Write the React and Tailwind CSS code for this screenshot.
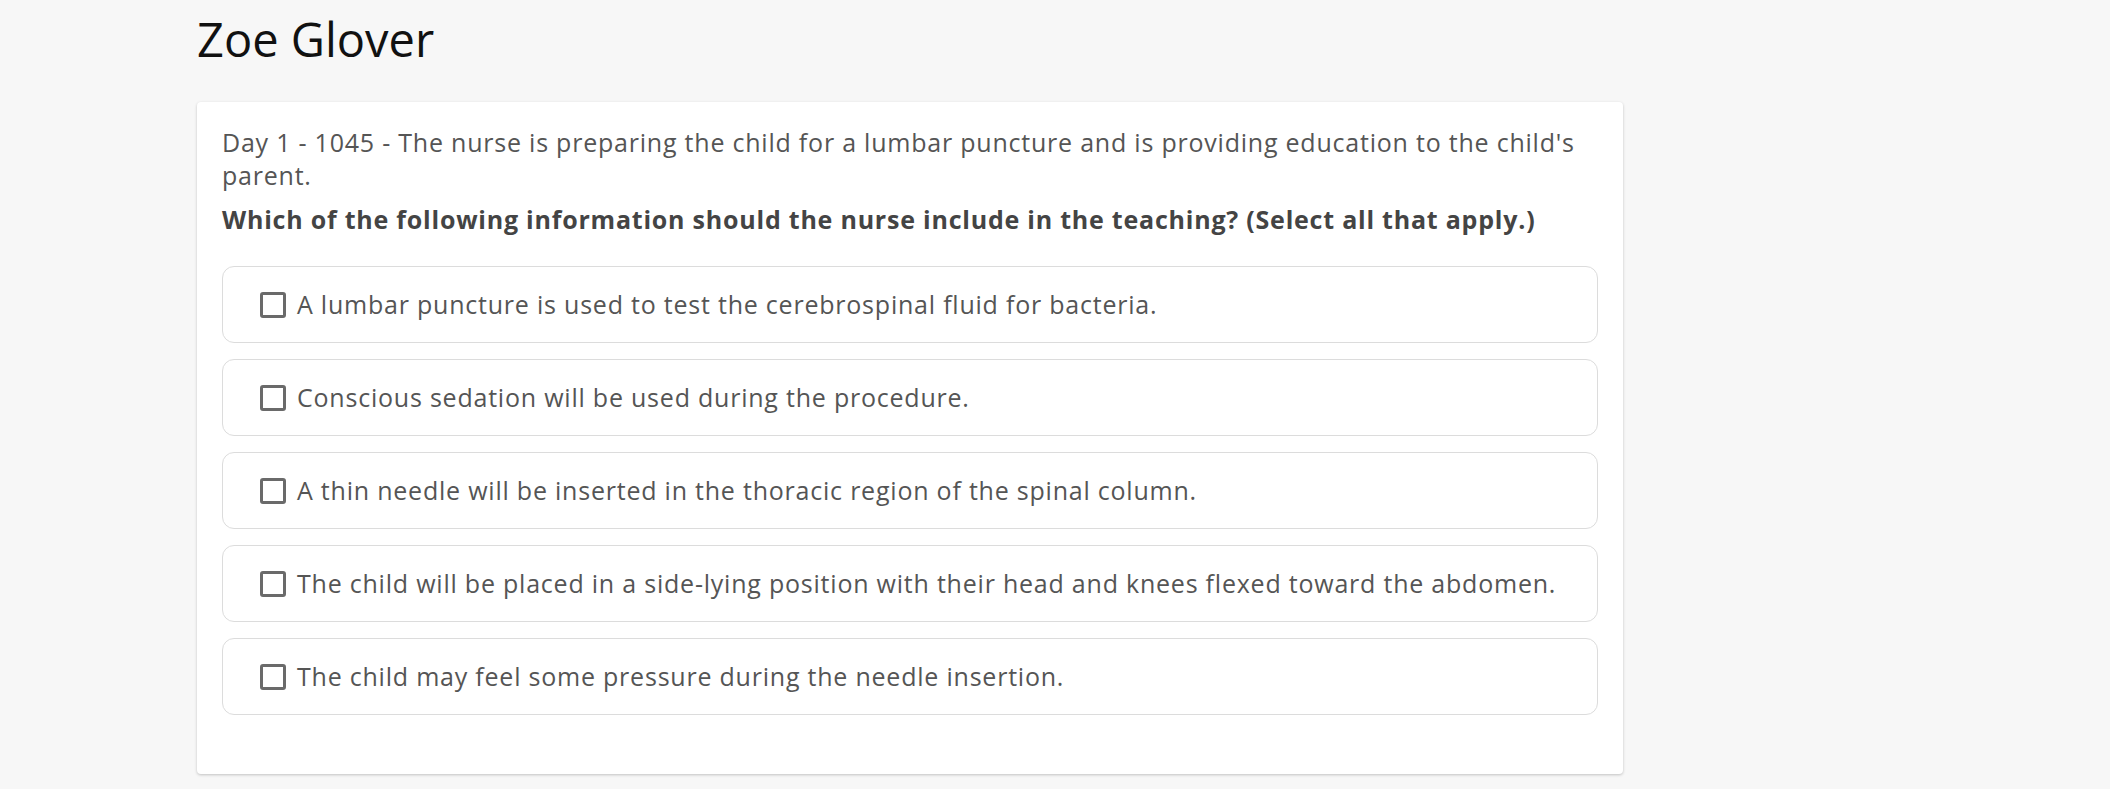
import React from "react";

const options = [
  "A lumbar puncture is used to test the cerebrospinal fluid for bacteria.",
  "Conscious sedation will be used during the procedure.",
  "A thin needle will be inserted in the thoracic region of the spinal column.",
  "The child will be placed in a side-lying position with their head and knees flexed toward the abdomen.",
  "The child may feel some pressure during the needle insertion.",
];

export default function App() {
  return (
    <div
      className="min-h-screen w-full bg-[#f7f7f7]"
      style={{ fontFamily: '"Open Sans", "Noto Sans", sans-serif' }}
    >
      <div className="pl-[197px] pt-[11px]">
        <h1 className="text-[47px] leading-[56px] font-normal text-[#111]">Zoe Glover</h1>
        <div className="mt-[35px] w-[1426px] bg-white rounded-[4px] shadow-[0_1px_3px_rgba(0,0,0,0.22)] px-[25px] pt-[24px] pb-[59px]">
          <p className="text-[25px] leading-[33px] tracking-[0.78px] text-[#555]">
            Day 1 - 1045 - The nurse is preparing the child for a lumbar puncture and is providing education to the child's parent.
          </p>
          <p className="mt-[11px] text-[25px] leading-[33px] tracking-[0.78px] font-bold text-[#444]">
            Which of the following information should the nurse include in the teaching? (Select all that apply.)
          </p>
          <div className="mt-[30px] flex flex-col gap-[16px]">
            {options.map((o) => (
              <label
                key={o}
                className="flex h-[77px] items-center gap-[11px] rounded-[12px] border border-[#dcdcdc] pl-[37px]"
              >
                <span className="h-[26px] w-[26px] shrink-0 rounded-[3px] border-[3px] border-[#6a6a6a] bg-white" />
                <span className="text-[25px] leading-[33px] tracking-[0.78px] text-[#555]">{o}</span>
              </label>
            ))}
          </div>
        </div>
      </div>
    </div>
  );
}
